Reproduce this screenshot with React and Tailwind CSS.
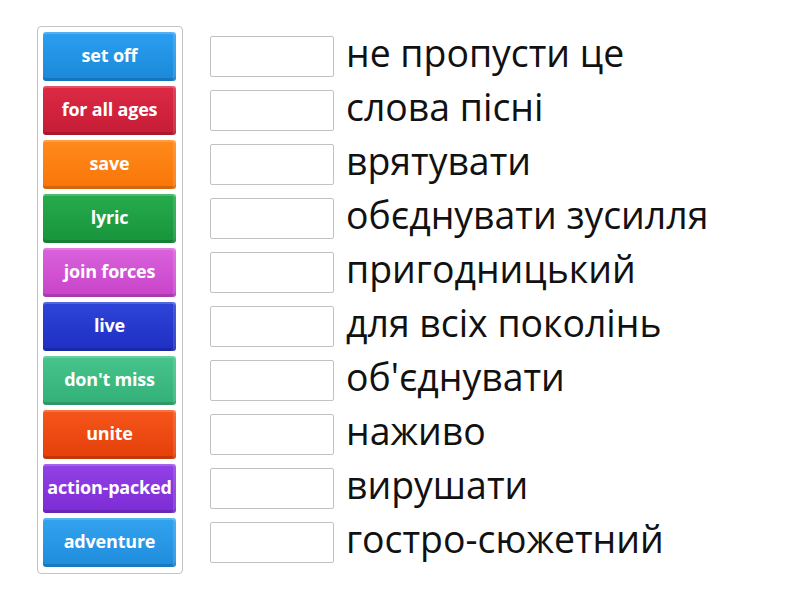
const tiles = [
  { t: "set off", c: "bg-[linear-gradient(#2c9ff0,#1a88d9)]" },
  { t: "for all ages", c: "bg-[linear-gradient(#dc2a45,#c61c35)]" },
  { t: "save", c: "bg-[linear-gradient(#ff8a1c,#f97508)]" },
  { t: "lyric", c: "bg-[linear-gradient(#26ab4c,#18943c)]" },
  { t: "join forces", c: "bg-[linear-gradient(#da62dc,#c843c9)]" },
  { t: "live", c: "bg-[linear-gradient(#2e44d8,#1f2fc3)]" },
  { t: "don't miss", c: "bg-[linear-gradient(#46c48c,#33b078)]" },
  { t: "unite", c: "bg-[linear-gradient(#f5561a,#e53e0a)]" },
  { t: "action-packed", c: "bg-[linear-gradient(#9241e6,#7d2cd6)]" },
  { t: "adventure", c: "bg-[linear-gradient(#33a3ef,#1e8cdc)]" },
];

const words = [
  "не пропусти це",
  "слова пісні",
  "врятувати",
  "обєднувати зусилля",
  "пригодницький",
  "для всіх поколінь",
  "об'єднувати",
  "наживо",
  "вирушати",
  "гостро-сюжетний",
];

export default function App() {
  return (
    <div className="w-[800px] h-[600px] bg-white flex items-start pt-[26px] pl-[37px] gap-[27px] font-['Open_Sans',sans-serif]">
      <div className="w-[146px] border border-[#c4c4c4] rounded-[4px] pl-[5px] pr-[6px] pt-[5px] pb-[6px] flex flex-col gap-[5px]">
        {tiles.map((x) => (
          <div
            key={x.t}
            className={`h-[49px] w-[133px] rounded-[3px] ${x.c} shadow-[inset_0_2px_0_rgba(255,255,255,0.18),inset_-3px_0_0_rgba(255,255,255,0.12),inset_0_-3px_0_rgba(0,0,0,0.14)] flex items-center justify-center text-white font-bold text-[18px] leading-none -tracking-[0.2px] pb-[4px] whitespace-nowrap`}
          >
            {x.t}
          </div>
        ))}
      </div>
      <div className="flex flex-col gap-[5px] pt-[6px]">
        {words.map((w) => (
          <div key={w} className="h-[49px] flex items-center gap-[12px]">
            <div className="w-[124px] h-[41px] border border-[#c2c2c2] rounded-[2px] bg-white" />
            <span className="text-[37.4px] text-[#111] leading-none whitespace-nowrap -mt-[8px]">{w}</span>
          </div>
        ))}
      </div>
    </div>
  );
}
